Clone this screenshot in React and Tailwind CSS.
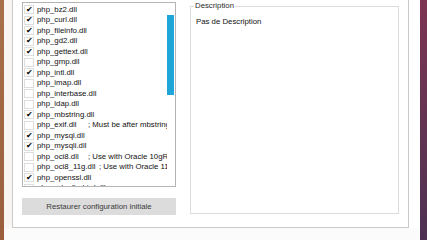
const EXTENSIONS = [
  { name: "php_bz2.dll", on: true },
  { name: "php_curl.dll", on: true },
  { name: "php_fileinfo.dll", on: true },
  { name: "php_gd2.dll", on: true },
  { name: "php_gettext.dll", on: true },
  { name: "php_gmp.dll", on: false },
  { name: "php_intl.dll", on: true },
  { name: "php_imap.dll", on: false },
  { name: "php_interbase.dll", on: false },
  { name: "php_ldap.dll", on: false },
  { name: "php_mbstring.dll", on: true },
  { name: "php_exif.dll", on: false, note: "; Must be after mbstring as it depends on it", pad: "w-[51px]" },
  { name: "php_mysql.dll", on: true },
  { name: "php_mysqli.dll", on: true },
  { name: "php_oci8.dll", on: false, note: "; Use with Oracle 10gR2 Instant Client", pad: "w-[51px]" },
  { name: "php_oci8_11g.dll", on: false, note: "; Use with Oracle 11gR2 Instant Client", pad: "w-[62px]" },
  { name: "php_openssl.dll", on: true },
  { name: "php_pdo_firebird.dll", on: false },
];

function Row({ item }) {
  return (
    <div className="flex h-[10.5px] shrink-0 items-center whitespace-nowrap">
      <span className="ml-[1px] flex h-[9px] w-[10px] shrink-0 items-center justify-center border border-[#dedede] bg-white text-[8px] leading-none text-black">
        {item.on ? "✔" : ""}
      </span>
      <span className="ml-[3px] flex">
        {item.note ? <span className={`${item.pad} shrink-0`}>{item.name}</span> : <span>{item.name}</span>}
        {item.note && <span>{item.note}</span>}
      </span>
    </div>
  );
}

export default function App() {
  return (
    <div
      className="flex h-[240px] w-[427px] overflow-hidden bg-white text-[#111111]"
      style={{ fontFamily: '"Liberation Sans", Arial, sans-serif' }}
    >
      <div className="w-[4px] shrink-0 bg-gradient-to-b from-[#a8704a] to-[#9a5e3c]" />
      <div className="flex flex-1 flex-col bg-[#f8f5f2]">
        <div className="flex h-[228px] shrink-0">
          <div className="w-[8px] shrink-0" />
          <div className="flex w-[397px] shrink-0 border-x border-b border-[#c9c9c9] bg-white pl-[9px]">
            <div className="flex w-[154px] shrink-0 flex-col">
              <div className="mt-[2px] flex h-[185px] shrink-0 border border-[#b4b4b4] bg-white text-[7.8px]">
                <div className="flex flex-1 flex-col overflow-hidden pt-[1.5px]">
                  {EXTENSIONS.map((item) => (
                    <Row key={item.name} item={item} />
                  ))}
                </div>
                <div className="w-[8px] shrink-0 pr-[1px] pt-[12px]">
                  <div className="h-[80px] w-[7px] bg-[#1ea6d9]" />
                </div>
              </div>
              <button className="mt-[11px] h-[17px] w-[154px] bg-[#dcdcdc] text-[7.8px] font-normal text-[#3a3a3a]">
                Restaurer configuration initiale
              </button>
            </div>
            <fieldset className="ml-[14px] mt-[1px] h-[213px] w-[209px] shrink-0 border border-[#dcdcdc] pl-[5px] text-[7.8px]">
              <legend className="ml-[-2px] px-[1px] leading-[10px] text-[#2a2a2a]">Description</legend>
              <p className="mt-[6px] leading-[10px]">Pas de Description</p>
            </fieldset>
          </div>
          <div className="flex-1 bg-white" />
        </div>
        <div className="flex-1 bg-[#fbfbfb]" />
      </div>
      <div className="w-[7px] shrink-0 bg-gradient-to-b from-[#7d3452] to-[#4d3152]" />
    </div>
  );
}
